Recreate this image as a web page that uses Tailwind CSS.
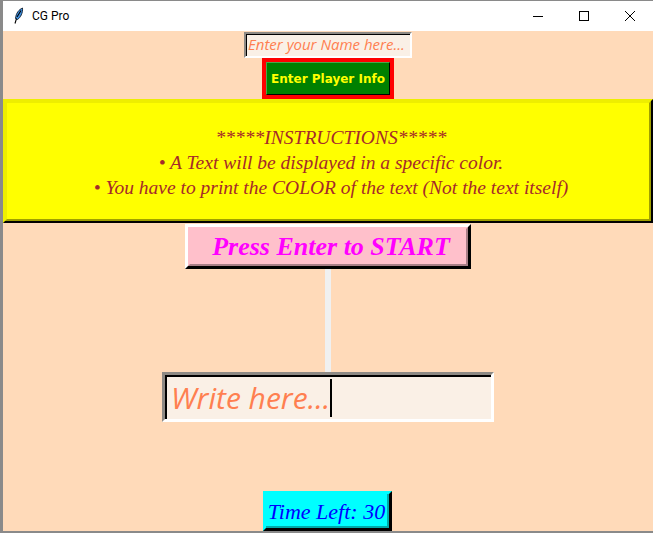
<!DOCTYPE html>
<html lang="en">
<head>
    <meta charset="UTF-8">
    <meta name="viewport" content="width=device-width, initial-scale=1.0">
    <title>CG Pro</title>
    <script src="https://cdn.jsdelivr.net/npm/@tailwindcss/browser@4"></script>
</head>
<body class="bg-[#ffdab9] overflow-hidden">
    <div class="w-[653px] h-[533px] flex flex-col border-l-[3px] border-t border-b-2 border-[#8a8a8a]">
        <!-- Title bar -->
        <header class="h-[30px] shrink-0 bg-white flex items-center pl-[9px] text-[12px] text-black font-['Roboto',sans-serif]">
            <svg class="w-[16px] h-[18px]" viewBox="0 0 16 18">
                <path d="M10.500 1C7 2.500 4 6 3.500 11.500L5.500 12.500C8.500 10.500 11 6 10.500 1Z" fill="#3d8fe0" stroke="#0d1b2a" stroke-width="0.9"/>
                <path d="M9 3.500L5 10M4.500 11.500L3 16.500" fill="none" stroke="#000" stroke-width="1.100"/>
            </svg>
            <span class="ml-[4px]">CG Pro</span>
            <div class="ml-auto flex items-center">
                <svg class="w-[46px] h-[30px]" viewBox="0 0 46 30"><path d="M18 15.500H28" stroke="#000"/></svg>
                <svg class="w-[46px] h-[30px]" viewBox="0 0 46 30"><rect x="18.500" y="10.500" width="9" height="9" fill="none" stroke="#000"/></svg>
                <svg class="w-[46px] h-[30px]" viewBox="0 0 46 30"><path d="M18 10L28 20M28 10L18 20" stroke="#000"/></svg>
            </div>
        </header>

        <!-- Main Content -->
        <main class="flex-1 flex flex-col items-center">
            <div class="w-[168px] h-[26px] mt-px border-2 border-t-[#8e8a85] border-l-[#8e8a85] border-r-white border-b-white">
                <div class="h-full border-t border-l border-black bg-[#faf0e6] pl-[1px] text-[15px] leading-[19px] italic text-[#ff7f50] font-['Open_Sans',sans-serif]">Enter your Name here...</div>
            </div>
            <div class="w-[132px] h-[41px] border-4 border-[#ff0000]">
                <div class="h-full border border-t-[#4ca64c] border-l-[#4ca64c] border-r-black border-b-black bg-[#008000] flex items-center justify-center pt-px text-[12px] font-bold text-[#ffff00] font-['DejaVu_Sans',sans-serif]">Enter Player Info</div>
            </div>
            <div class="w-full h-[124px] border-2 border-t-[#eeee00] border-l-[#eeee00] border-r-black border-b-black">
                <div class="h-full border-2 border-t-[#eeee00] border-l-[#eeee00] border-r-[#a0a000] border-b-[#a0a000] bg-[#ffff00] flex flex-col items-center justify-center pt-[2px] pl-[6px] text-[19.5px] leading-[25px] italic text-[#a52a2a] font-['Liberation_Serif',serif]">
                    <p>*****INSTRUCTIONS*****</p>
                    <p>• A Text will be displayed in a specific color.</p>
                    <p>• You have to print the COLOR of the text (Not the text itself)</p>
                </div>
            </div>
            <div class="w-[286px] h-[45px] mt-px border-[3px] border-t-white border-l-white border-r-black border-b-black">
                <div class="h-full border-2 border-t-[#ffc0cb] border-l-[#ffc0cb] border-r-[#a87f87] border-b-[#a87f87] bg-[#ffc0cb] flex items-center justify-center pl-[6px] text-[26px] font-bold italic text-[#ff00ff] font-['Liberation_Serif',serif]">Press Enter to START</div>
            </div>
            <div class="w-[6px] h-[103px] bg-[#f0f0f0]"></div>
            <div class="w-[332px] h-[50px] border-[3px] border-t-[#8e8a85] border-l-[#8e8a85] border-r-white border-b-white">
                <div class="h-full border-t-2 border-l-2 border-black bg-[#faf0e6] flex items-center pl-[4px] text-[30px] italic text-[#ff7f50] font-['Open_Sans',sans-serif]">
                    <span class="-mt-[2px]">Write here...</span>
                    <span class="w-[2px] h-[38px] bg-black"></span>
                </div>
            </div>
            <div class="w-[129px] h-[40px] mt-[69px] -ml-px border-[3px] border-t-[#00ffff] border-l-[#00ffff] border-r-black border-b-black">
                <div class="h-full border-r-2 border-b-2 border-[#00aaaa] bg-[#00ffff] flex items-center justify-center pt-[3px] text-[22px] leading-none italic text-[#0000ff] font-['Liberation_Serif',serif] whitespace-nowrap">Time Left: 30</div>
            </div>
        </main>
    </div>
</body>
</html>
